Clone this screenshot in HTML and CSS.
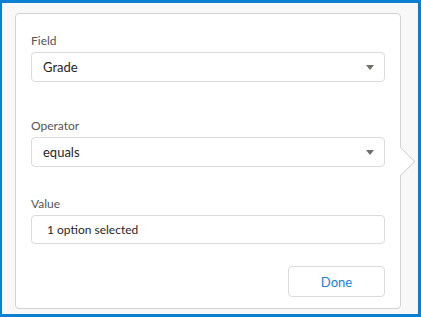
FILE: index.html
```html
<!DOCTYPE html>
<html>
    <head>
        <meta name="viewport" content="width=device-width, initial-scale=1">
        <link rel="stylesheet" href="styles.css">
    </head>
    <body>
        <div class="popover">
            <!-- Field -->
            <div class="group">
                <p class="label">Field</p>
                <div class="select">
                    <span>Grade</span>
                    <i class="caret"></i>
                </div>
            </div>
            <!-- Operator -->
            <div class="group group-operator">
                <p class="label">Operator</p>
                <div class="select">
                    <span>equals</span>
                    <i class="caret"></i>
                </div>
            </div>
            <!-- Value -->
            <div class="group group-value">
                <p class="label">Value</p>
                <div class="value-box">1 option selected</div>
            </div>
            <div class="footer">
                <button type="button" class="button-done">Done</button>
            </div>
        </div>
    </body>
</html>
```

FILE: styles.css
```css
html, body {
    margin: 0;
}
body {
    box-sizing: border-box;
    width: 421px;
    height: 317px;
    padding: 10px 0 0 13px;
    border-style: solid;
    border-color: #0b7fd1;
    border-width: 3px 3px 3px 2px;
    background-color: #f8f8f8;
    font-family: Lato, "Open Sans", sans-serif;
    color: #181818;
}
p {
    margin: 0;
}
.popover {
    position: relative;
    box-sizing: border-box;
    width: 386px;
    height: 296px;
    padding: 18px 15px 11px 15px;
    background-color: #FFFFFF;
    border: 1px solid #d3d3d3;
    border-radius: 4px;
    display: flex;
    flex-direction: column;
}
/* nubbin pointing right */
.popover::after {
    content: "";
    position: absolute;
    right: -11px;
    top: 137px;
    width: 20px;
    height: 20px;
    background-color: #FFFFFF;
    border-top: 1px solid #d3d3d3;
    border-right: 1px solid #d3d3d3;
    transform: rotate(45deg);
}
.label {
    font-size: 12px;
    line-height: 18px;
    color: #555555;
    margin-bottom: 2px;
}
.group-operator {
    margin-top: 35px;
}
.group-value {
    margin-top: 28px;
}
.select, .value-box {
    box-sizing: border-box;
    height: 30px;
    border: 1px solid #dddbda;
    border-radius: 4px;
    background-color: #FFFFFF;
    font-size: 13px;
    color: #1f1f1f;
    display: flex;
    align-items: center;
}
.select {
    padding: 0 10px 0 11px;
    justify-content: space-between;
}
.caret {
    width: 0;
    height: 0;
    border-left: 4.5px solid transparent;
    border-right: 4.5px solid transparent;
    border-top: 5px solid #706e6b;
}
.value-box {
    height: 29px;
    padding-left: 15px;
    font-size: 12px;
}
.footer {
    margin-top: auto;
    display: flex;
    justify-content: flex-end;
}
.button-done {
    box-sizing: border-box;
    width: 97px;
    height: 31px;
    margin: 0;
    padding: 0;
    background-color: #FFFFFF;
    border: 1px solid #dddbda;
    border-radius: 4px;
    font-family: Lato, "Open Sans", sans-serif;
    font-size: 13px;
    color: #1b82d6;
    cursor: pointer;
}
```
